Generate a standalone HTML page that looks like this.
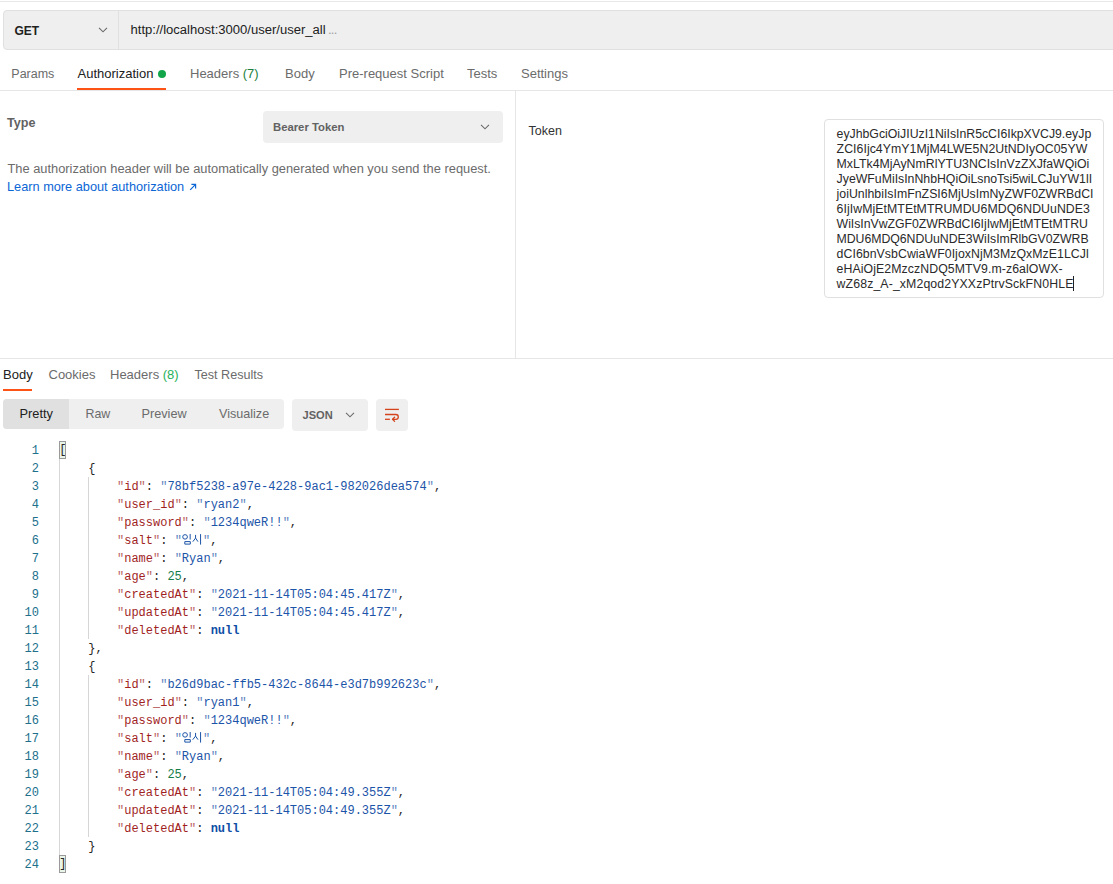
<!DOCTYPE html>
<html><head><meta charset="utf-8">
<style>
*{margin:0;padding:0;box-sizing:border-box}
html,body{width:1113px;height:884px;overflow:hidden;background:#fff}
body{position:relative;font-family:"Liberation Sans",sans-serif;color:#212121}
.a{position:absolute;white-space:nowrap;line-height:16px}
.ln{position:absolute;background:#e6e6e6}
.tab{font-size:13px;color:#6b6b6b}
.tab.on{color:#212121}
.grn{color:#1e7f3e}.grn2{color:#26b15a}
.chev{position:absolute}
#code{position:absolute;left:0;top:441px;font-family:"Liberation Mono",monospace;font-size:12px;line-height:18px}
#code .r{position:relative;height:18px;white-space:pre}
#code .n{position:absolute;left:0;top:1px;width:39px;text-align:right;color:#20708c}
#code .c{position:absolute;left:59.4px;top:1px;color:#262626}
.kor{display:inline-block;width:21.2px;height:18px;vertical-align:top;position:relative}
.kor svg{position:absolute;left:0;top:0;overflow:visible}
.br{display:inline-block;width:6.6px;height:17.5px;vertical-align:top;position:relative;top:-1px;left:-0.2px;background:#e9f5e9;outline:1px solid #9a9a9a;outline-offset:-1px}
.guide{position:absolute;width:1px;background:#d6d6d6}
#code i{font-style:normal;opacity:.72}
.k{color:#a11f1f}.s{color:#1b54a8}.num{color:#167d4a}.nl{color:#0e4ea6;font-weight:bold}
</style></head><body>
<!-- top border -->
<div class="ln" style="left:0;top:1px;width:1113px;height:1px;background:#e8e8e8"></div>

<!-- URL bar -->
<div style="position:absolute;left:3px;top:10px;width:1120px;height:40px;background:#efefef;border:1px solid #e0e0e0;border-radius:4px"></div>
<div class="ln" style="left:118px;top:11px;width:1px;height:38px;background:#e0e0e0"></div>
<div class="a" style="left:14.5px;top:23px;font-size:12px;font-weight:bold;color:#212121">GET</div>
<svg class="chev" style="left:98px;top:27px" width="10" height="6" viewBox="0 0 10 6"><path d="M1 0.8 L5 4.8 L9 0.8" fill="none" stroke="#6b6b6b" stroke-width="1.1"/></svg>
<div class="a" style="left:130.5px;top:22px;font-size:13.05px;color:#212121">http://localhost:3000/user/user_all<span style="position:absolute;left:197.5px;top:0;color:#a0a0a0;letter-spacing:-0.8px">...</span></div>

<!-- request tabs -->
<div class="a tab" style="left:11.3px;top:65.5px;font-size:12.5px">Params</div>
<div class="a tab on" style="left:77.5px;top:65.5px">Authorization</div>
<div style="position:absolute;left:158px;top:70px;width:8px;height:8px;border-radius:50%;background:#12a54a"></div>
<div class="ln" style="left:77px;top:88px;width:89px;height:2px;background:#fd5316"></div>
<div class="a tab" style="left:190px;top:65.5px">Headers <span class="grn">(7)</span></div>
<div class="a tab" style="left:285px;top:65.5px">Body</div>
<div class="a tab" style="left:339px;top:65.5px">Pre-request Script</div>
<div class="a tab" style="left:467px;top:65.5px">Tests</div>
<div class="a tab" style="left:521px;top:65.5px">Settings</div>
<div class="ln" style="left:0;top:90px;width:1113px;height:1px"></div>

<!-- auth panel -->
<div class="ln" style="left:515px;top:91px;width:1px;height:267px"></div>
<div class="a" style="left:7px;top:114.6px;font-size:12.6px;font-weight:bold;color:#626262">Type</div>
<div style="position:absolute;left:263px;top:111px;width:240px;height:32px;background:#efefef;border-radius:4px"></div>
<div class="a" style="left:273px;top:119px;font-size:11.3px;font-weight:bold;color:#626262">Bearer Token</div>
<svg class="chev" style="left:480px;top:124px" width="10" height="6" viewBox="0 0 10 6"><path d="M1 0.8 L5 4.8 L9 0.8" fill="none" stroke="#6b6b6b" stroke-width="1.1"/></svg>
<div class="a" style="left:7.5px;top:160.5px;font-size:12.85px;color:#6b6b6b">The authorization header will be automatically generated when you send the request.</div>
<div class="a" style="left:7px;top:178.5px;font-size:12.75px;color:#0b66d6">Learn more about authorization</div>
<svg style="position:absolute;left:189px;top:183px" width="8" height="8" viewBox="0 0 8 8"><g fill="none" stroke="#0b66d6" stroke-width="1.2"><path d="M1.2 6.8L6.6 1.4M2.4 1.4H6.6V5.6"/></g></svg>

<div class="a" style="left:528.5px;top:122.5px;font-size:12.5px;color:#333">Token</div>
<div style="position:absolute;left:824px;top:119px;width:280px;height:179px;border:1px solid #e0e0e0;border-radius:4px"></div>
<div id="tok" style="position:absolute;left:836.6px;top:127px;font-size:12.3px;line-height:15px;color:#2a2a2a;white-space:pre"><div style="letter-spacing:-0.007px">eyJhbGciOiJIUzI1NiIsInR5cCI6IkpXVCJ9.eyJp</div><div style="letter-spacing:0.048px">ZCI6Ijc4YmY1MjM4LWE5N2UtNDIyOC05YW</div><div style="letter-spacing:0.011px">MxLTk4MjAyNmRlYTU3NCIsInVzZXJfaWQiOi</div><div style="letter-spacing:-0.003px">JyeWFuMiIsInNhbHQiOiLsnoTsi5wiLCJuYW1lI</div><div style="letter-spacing:0.019px">joiUnlhbiIsImFnZSI6MjUsImNyZWF0ZWRBdCI</div><div style="letter-spacing:0.059px">6IjIwMjEtMTEtMTRUMDU6MDQ6NDUuNDE3</div><div style="letter-spacing:-0.043px">WiIsInVwZGF0ZWRBdCI6IjIwMjEtMTEtMTRU</div><div style="letter-spacing:-0.048px">MDU6MDQ6NDUuNDE3WiIsImRlbGV0ZWRB</div><div style="letter-spacing:0.057px">dCI6bnVsbCwiaWF0IjoxNjM3MzQxMzE1LCJl</div><div style="letter-spacing:0.083px">eHAiOjE2MzczNDQ5MTV9.m-z6alOWX-</div><div style="letter-spacing:0.116px">wZ68z_A-_xM2qod2YXXzPtrvSckFN0HLE</div></div>
<div class="ln" style="left:1073px;top:276px;width:1px;height:15px;background:#212121"></div>

<!-- response -->
<div class="ln" style="left:0;top:358px;width:1113px;height:1px"></div>
<div class="a tab on" style="left:3px;top:366.5px">Body</div>
<div class="ln" style="left:3px;top:389px;width:29px;height:2px;background:#fd5316"></div>
<div class="a tab" style="left:48.5px;top:366.5px">Cookies</div>
<div class="a tab" style="left:110px;top:366.5px">Headers <span class="grn2">(8)</span></div>
<div class="a tab" style="left:194.5px;top:366.5px;font-size:12.6px">Test Results</div>

<div style="position:absolute;left:3px;top:399px;width:281px;height:30px;background:#efefef;border-radius:4px;overflow:hidden"><div style="position:absolute;left:0;top:0;width:66px;height:30px;background:#e0e0e0"></div></div>
<div class="a tab on" style="left:19.5px;top:406px;font-size:12.8px">Pretty</div>
<div class="a tab" style="left:85.5px;top:406px;font-size:12.4px">Raw</div>
<div class="a tab" style="left:141.5px;top:406px;font-size:12.7px">Preview</div>
<div class="a tab" style="left:219px;top:406px;font-size:12.6px">Visualize</div>

<div style="position:absolute;left:292px;top:399px;width:76px;height:32px;background:#efefef;border-radius:4px"></div>
<div class="a" style="left:302.5px;top:407.3px;font-size:11.1px;font-weight:bold;color:#626262">JSON</div>
<svg class="chev" style="left:345px;top:412px" width="10" height="6" viewBox="0 0 10 6"><path d="M1 0.8 L5 4.8 L9 0.8" fill="none" stroke="#6b6b6b" stroke-width="1.1"/></svg>
<div style="position:absolute;left:376px;top:399px;width:32px;height:32px;background:#efefef;border-radius:4px"></div>
<svg style="position:absolute;left:384px;top:407px" width="16" height="16" viewBox="0 0 16 16"><g fill="none" stroke="#d4441c" stroke-width="1.3"><path d="M1 2.4H14.9"/><path d="M1 7.5H11.9A2.4 2.4 0 0 1 11.9 12.3H8.7"/><path d="M10.6 10.2L8.5 12.3L10.6 14.4" stroke-linecap="round" stroke-linejoin="round"/><path d="M1 12.3H5.9"/></g></svg>

<!--CODE--><div id="code">
<div class="r"><span class="n">1</span><span class="c"><span class="br">[</span></span></div>
<div class="r"><span class="n">2</span><span class="c">    {</span></div>
<div class="r"><span class="n">3</span><span class="c">        <span class="k"><i>"</i>id<i>"</i></span>: <span class="s"><i>"</i>78bf5238-a97e-4228-9ac1-982026dea574<i>"</i></span>,</span></div>
<div class="r"><span class="n">4</span><span class="c">        <span class="k"><i>"</i>user_id<i>"</i></span>: <span class="s"><i>"</i>ryan2<i>"</i></span>,</span></div>
<div class="r"><span class="n">5</span><span class="c">        <span class="k"><i>"</i>password<i>"</i></span>: <span class="s"><i>"</i>1234qweR!!<i>"</i></span>,</span></div>
<div class="r"><span class="n">6</span><span class="c">        <span class="k"><i>"</i>salt<i>"</i></span>: <span class="s"><i>"</i></span><span class="kor"><svg width="22" height="18" viewBox="0 0 22 18"><g fill="none" stroke="#1b54a8" stroke-width="1"><ellipse cx="3.07" cy="4.9" rx="2.35" ry="2.25"/><path d="M8.17 2V7.6"/><path d="M2.8 9.6H8.3V12.1H2.8Z"/><path d="M13.57 2.9V6.1L10.77 9.7M13.57 6.1L15.97 9.6"/><path d="M18.57 2.1V12.6"/></g></svg></span><span class="s"><i>"</i></span>,</span></div>
<div class="r"><span class="n">7</span><span class="c">        <span class="k"><i>"</i>name<i>"</i></span>: <span class="s"><i>"</i>Ryan<i>"</i></span>,</span></div>
<div class="r"><span class="n">8</span><span class="c">        <span class="k"><i>"</i>age<i>"</i></span>: <span class="num">25</span>,</span></div>
<div class="r"><span class="n">9</span><span class="c">        <span class="k"><i>"</i>createdAt<i>"</i></span>: <span class="s"><i>"</i>2021-11-14T05:04:45.417Z<i>"</i></span>,</span></div>
<div class="r"><span class="n">10</span><span class="c">        <span class="k"><i>"</i>updatedAt<i>"</i></span>: <span class="s"><i>"</i>2021-11-14T05:04:45.417Z<i>"</i></span>,</span></div>
<div class="r"><span class="n">11</span><span class="c">        <span class="k"><i>"</i>deletedAt<i>"</i></span>: <span class="nl">null</span></span></div>
<div class="r"><span class="n">12</span><span class="c">    },</span></div>
<div class="r"><span class="n">13</span><span class="c">    {</span></div>
<div class="r"><span class="n">14</span><span class="c">        <span class="k"><i>"</i>id<i>"</i></span>: <span class="s"><i>"</i>b26d9bac-ffb5-432c-8644-e3d7b992623c<i>"</i></span>,</span></div>
<div class="r"><span class="n">15</span><span class="c">        <span class="k"><i>"</i>user_id<i>"</i></span>: <span class="s"><i>"</i>ryan1<i>"</i></span>,</span></div>
<div class="r"><span class="n">16</span><span class="c">        <span class="k"><i>"</i>password<i>"</i></span>: <span class="s"><i>"</i>1234qweR!!<i>"</i></span>,</span></div>
<div class="r"><span class="n">17</span><span class="c">        <span class="k"><i>"</i>salt<i>"</i></span>: <span class="s"><i>"</i></span><span class="kor"><svg width="22" height="18" viewBox="0 0 22 18"><g fill="none" stroke="#1b54a8" stroke-width="1"><ellipse cx="3.07" cy="4.9" rx="2.35" ry="2.25"/><path d="M8.17 2V7.6"/><path d="M2.8 9.6H8.3V12.1H2.8Z"/><path d="M13.57 2.9V6.1L10.77 9.7M13.57 6.1L15.97 9.6"/><path d="M18.57 2.1V12.6"/></g></svg></span><span class="s"><i>"</i></span>,</span></div>
<div class="r"><span class="n">18</span><span class="c">        <span class="k"><i>"</i>name<i>"</i></span>: <span class="s"><i>"</i>Ryan<i>"</i></span>,</span></div>
<div class="r"><span class="n">19</span><span class="c">        <span class="k"><i>"</i>age<i>"</i></span>: <span class="num">25</span>,</span></div>
<div class="r"><span class="n">20</span><span class="c">        <span class="k"><i>"</i>createdAt<i>"</i></span>: <span class="s"><i>"</i>2021-11-14T05:04:49.355Z<i>"</i></span>,</span></div>
<div class="r"><span class="n">21</span><span class="c">        <span class="k"><i>"</i>updatedAt<i>"</i></span>: <span class="s"><i>"</i>2021-11-14T05:04:49.355Z<i>"</i></span>,</span></div>
<div class="r"><span class="n">22</span><span class="c">        <span class="k"><i>"</i>deletedAt<i>"</i></span>: <span class="nl">null</span></span></div>
<div class="r"><span class="n">23</span><span class="c">    }</span></div>
<div class="r"><span class="n">24</span><span class="c"><span class="br">]</span></span></div>
</div><!--/CODE-->
<div class="guide" style="left:59px;top:459px;height:396px"></div>
<div class="guide" style="left:88px;top:477px;height:162px"></div>
<div class="guide" style="left:88px;top:675px;height:162px"></div>
</body></html>
